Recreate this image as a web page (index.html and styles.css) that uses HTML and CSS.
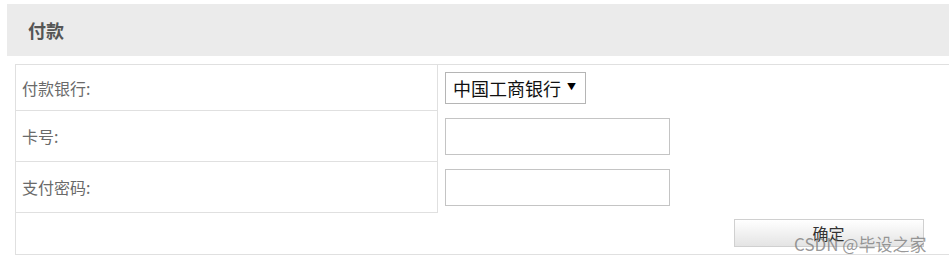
FILE: index.html
```html
<!DOCTYPE html>
<html lang="zh-CN">
<head>
<meta charset="utf-8">
<title>付款</title>
<link rel="stylesheet" href="styles.css">
</head>
<body>
<div class="page">
  <div class="panel-head">付款</div>
  <form class="pay-form">
    <table class="pay-table">
      <tr class="row-bank">
        <td class="label">付款银行:</td>
        <td class="field">
          <span class="select-wrap">
            <select class="bank-select">
              <option>中国工商银行</option>
              <option>中国建设银行</option>
              <option>中国农业银行</option>
              <option>中国银行</option>
            </select>
          </span>
        </td>
      </tr>
      <tr class="row-input">
        <td class="label">卡号:</td>
        <td class="field"><input class="text-input" type="text"></td>
      </tr>
      <tr class="row-input">
        <td class="label">支付密码:</td>
        <td class="field"><input class="text-input" type="password"></td>
      </tr>
      <tr class="row-action">
        <td class="empty"></td>
        <td class="field action"><button class="submit-btn" type="button">确定</button></td>
      </tr>
    </table>
  </form>
  <div class="watermark">CSDN @毕设之家</div>
</div>
</body>
</html>
```

FILE: styles.css
```css
html, body {
  margin: 0;
  padding: 0;
  background: #ffffff;
  overflow: hidden;
}

body {
  font-family: "Noto Sans CJK SC", "Noto Sans", "Liberation Sans", sans-serif;
}

.page {
  position: relative;
  width: 942px;
  padding: 4px 0 0 7px;
}

.panel-head {
  height: 52px;
  line-height: 52px;
  background: #ebebeb;
  padding-left: 21px;
  font-size: 18px;
  font-weight: bold;
  color: #555555;
}

.pay-form {
  margin: 8px 0 0 8px;
}

.pay-table {
  border-collapse: collapse;
  width: 935px;
  border: 1px solid #e0e0e0;
}

.pay-table td {
  padding: 0;
  vertical-align: middle;
}

.label {
  width: 415px;
  padding-left: 6px !important;
  font-size: 16px;
  color: #6a6a6a;
  border-right: 1px solid #e0e0e0;
  border-bottom: 1px solid #e0e0e0;
}

.field {
  padding-left: 7px !important;
}

.row-bank {
  height: 46px;
}

.row-input {
  height: 51px;
}

.row-action {
  height: 42px;
}

.action {
  padding-left: 296px !important;
}

.select-wrap {
  position: relative;
  display: inline-block;
  vertical-align: middle;
}

.select-wrap::after {
  content: "\25BC";
  position: absolute;
  right: 10px;
  top: 9px;
  font-size: 9px;
  line-height: 12px;
  color: #000000;
  pointer-events: none;
}

.bank-select {
  -webkit-appearance: none;
  appearance: none;
  display: block;
  width: 141px;
  height: 32px;
  margin: 0;
  padding: 0 0 0 7px;
  border: 1px solid #b5b5b5;
  border-radius: 0;
  background: #ffffff;
  font-family: "Noto Sans CJK SC", "Noto Sans", sans-serif;
  font-size: 18px;
  color: #111111;
  outline: none;
}

.text-input {
  display: block;
  box-sizing: border-box;
  width: 225px;
  height: 37px;
  margin: 0;
  padding: 0 6px;
  border: 1px solid #c4c4c4;
  border-radius: 0;
  background: #ffffff;
  font-size: 15px;
  outline: none;
}

.submit-btn {
  display: block;
  box-sizing: border-box;
  width: 190px;
  height: 28px;
  margin: 0;
  padding: 0;
  border: 1px solid #d0d0d0;
  border-radius: 0;
  background: linear-gradient(#ffffff, #e4e4e4);
  font-family: "Noto Sans CJK SC", "Noto Sans", sans-serif;
  font-size: 16px;
  line-height: 26px;
  color: #333333;
}

.watermark {
  position: absolute;
  left: 794px;
  top: 233px;
  font-size: 17px;
  line-height: 22px;
  color: rgba(120, 120, 120, 0.75);
  white-space: nowrap;
  pointer-events: none;
}
```
